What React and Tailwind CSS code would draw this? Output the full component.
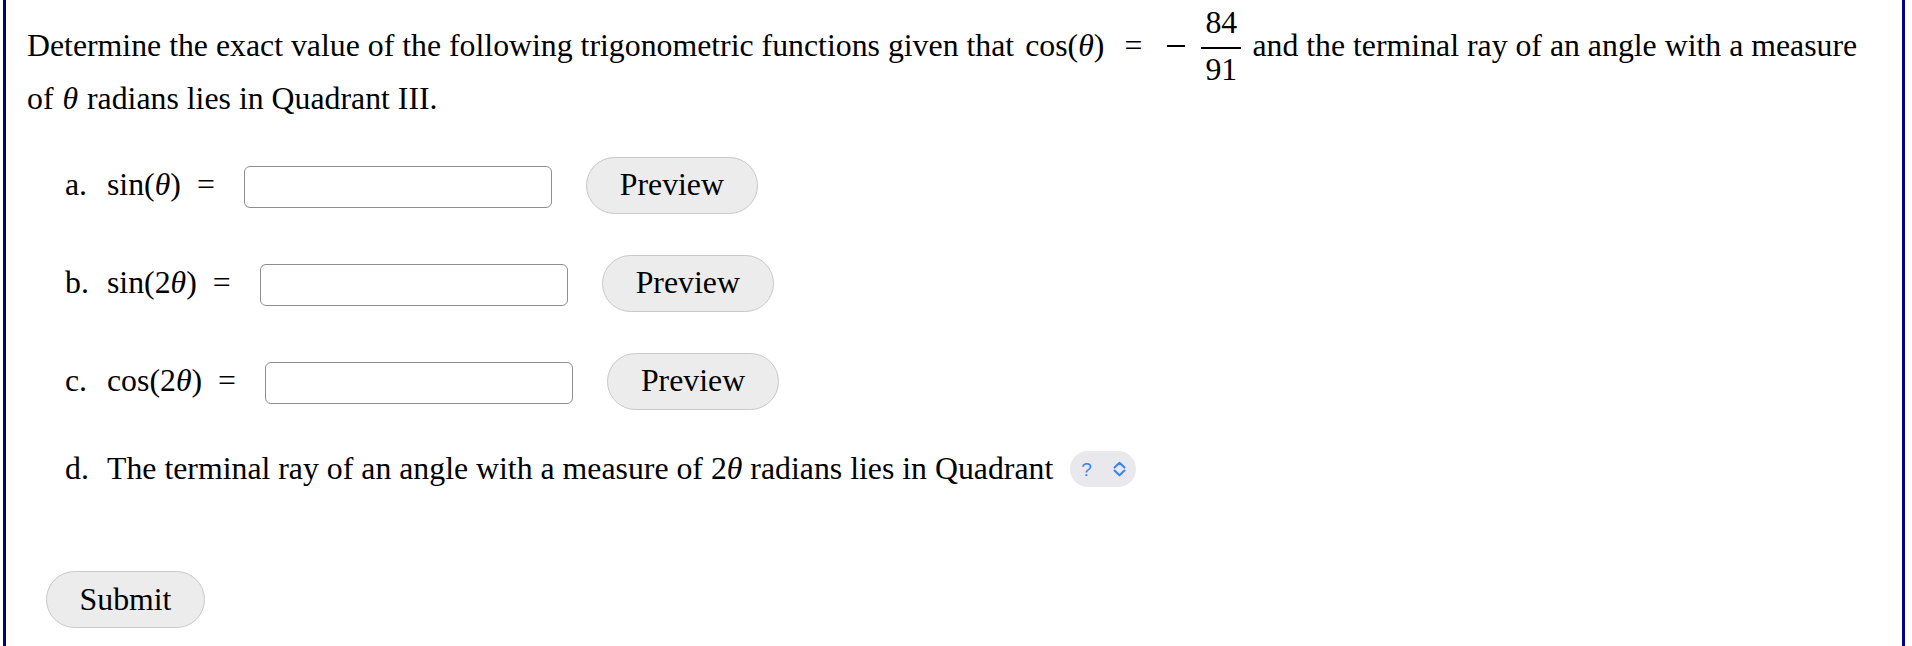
import React from "react";

const serif = { fontFamily: '"Liberation Serif", "Times New Roman", serif' };

function Theta() {
  return <span className="italic">θ</span>;
}

function Frac({ num, den }) {
  return (
    <span className="inline-flex flex-col items-center">
      <span className="block h-[32px] leading-[32px]">{num}</span>
      <span className="block mt-[8px] h-[2px] w-[40px] bg-black" />
      <span className="block mt-[5px] h-[32px] leading-[32px]">{den}</span>
    </span>
  );
}

function AnswerRow({ label, children }) {
  return (
    <div className="flex h-[56px] items-center">
      <span className="w-[42px] shrink-0">{label}</span>
      <span className="whitespace-nowrap">{children}</span>
      <span className="ml-[16px] mr-[29px]">=</span>
      <input
        type="text"
        aria-label="answer"
        className="mt-[4px] h-[42px] w-[308px] rounded-[6px] border-[1.5px] border-[#8e8e8e] bg-white outline-none"
      />
      <button className="ml-[34px] h-[57px] w-[172px] rounded-full border border-[#c9c9c9] bg-[#ececec] text-[31.8px] leading-none text-black">
        Preview
      </button>
    </div>
  );
}

export default function App() {
  return (
    <div className="h-[646px] w-full overflow-hidden bg-white text-black" style={serif}>
      <div className="ml-[3px] mr-[7px] h-[700px] border-x-[3px] border-[#00008b] pl-[21px] text-[31.8px] leading-[32px]">
        <div className="pt-[8px]">
          <div className="flex h-[76px] items-center whitespace-nowrap">
            <span>Determine the exact value of the following trigonometric functions given that</span>
            <span className="ml-[11px]">
              cos(<Theta />)
            </span>
            <span className="ml-[18px] w-[22px] text-center">=</span>
            <span className="ml-[23px] h-[2px] w-[18px] bg-black" />
            <span className="ml-[16px]">
              <Frac num="84" den="91" />
            </span>
            <span className="ml-[11px]">and the terminal ray of an angle with a measure</span>
          </div>
          <div className="-mt-[1px] h-[32px] whitespace-nowrap">
            of <span className="mx-[1px]"><Theta /></span> radians lies in Quadrant III.
          </div>
        </div>

        <div className="ml-[38px] mt-[42px] flex flex-col gap-[42px]">
          <AnswerRow label="a.">
            sin(<Theta />)
          </AnswerRow>
          <AnswerRow label="b.">
            sin(2<Theta />)
          </AnswerRow>
          <AnswerRow label="c.">
            cos(2<Theta />)
          </AnswerRow>
        </div>

        <div className="ml-[38px] mt-[42px] flex h-[36px] items-center whitespace-nowrap">
          <span className="w-[42px] shrink-0">d.</span>
          <span>
            The terminal ray of an angle with a measure of 2<Theta /> radians lies in Quadrant
          </span>
          <span className="ml-[17px] flex h-[36px] w-[66px] shrink-0 items-center rounded-full bg-[#e9e9ed] pl-[11px]">
            <span
              className="text-[19px] leading-none text-[#3b7ff5]"
              style={{ fontFamily: '"Liberation Sans", Arial, sans-serif' }}
            >
              ?
            </span>
            <svg className="ml-[20px]" width="15" height="16" viewBox="0 0 15 16" fill="none">
              <path d="M2.5 6.5 L7.5 1.8 L12.5 6.5" stroke="#3b7ff5" strokeWidth="2" strokeLinecap="round" strokeLinejoin="round" />
              <path d="M2.5 9.5 L7.5 14.2 L12.5 9.5" stroke="#3b7ff5" strokeWidth="2" strokeLinecap="round" strokeLinejoin="round" />
            </svg>
          </span>
        </div>

        <div className="mt-[84px]">
          <button className="ml-[19px] h-[57px] w-[159px] rounded-full border border-[#c9c9c9] bg-[#ececec] text-[31.8px] leading-none text-black">
            Submit
          </button>
        </div>
      </div>
    </div>
  );
}
